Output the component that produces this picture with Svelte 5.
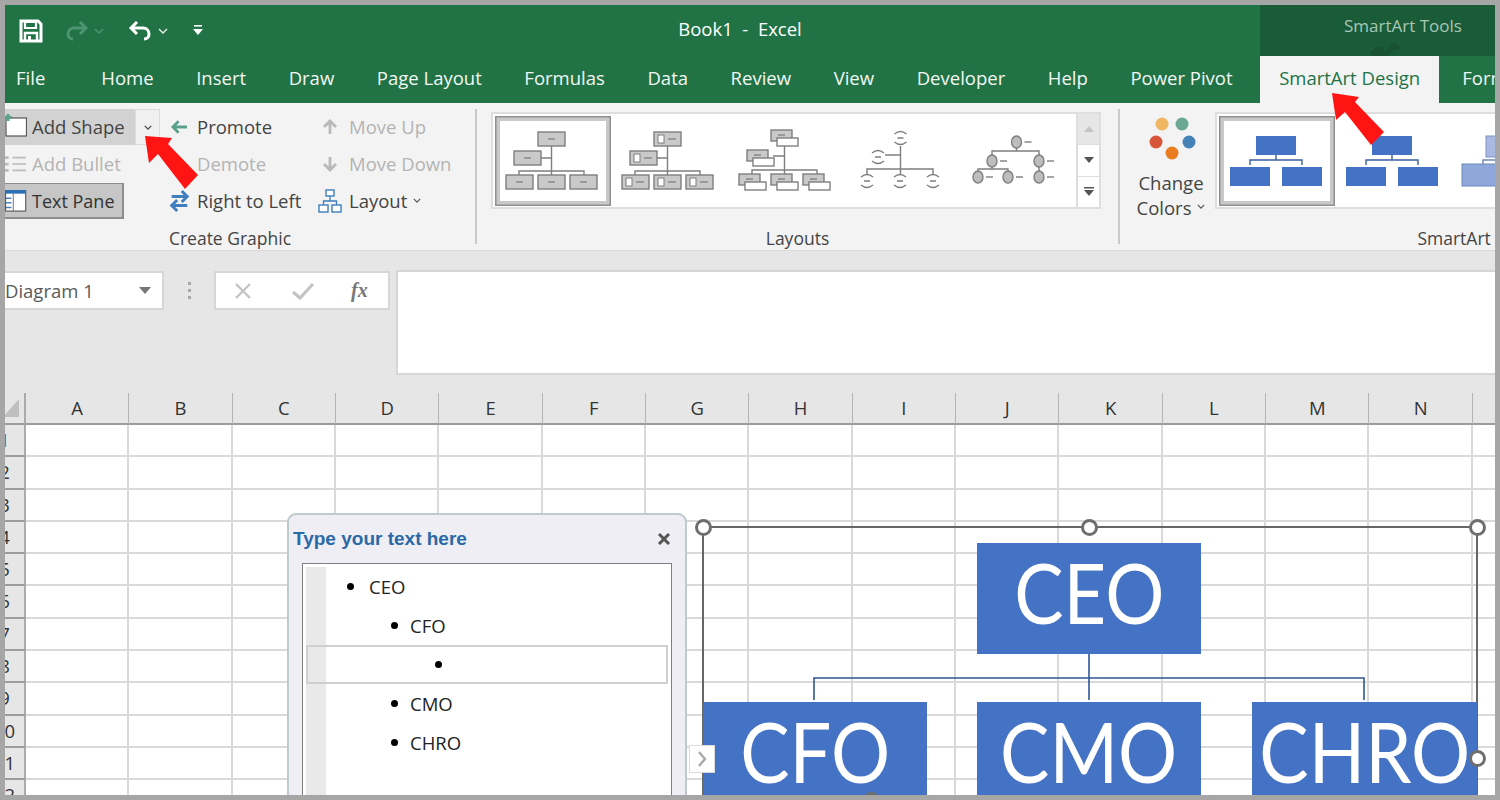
<script>
  const tabs = ['File','Home','Insert','Draw','Page Layout','Formulas','Data','Review','View','Developer','Help','Power Pivot'];
  const cols = 'ABCDEFGHIJKLMNO'.split('');
  const rows = Array.from({length:12},(_,i)=>i+1);
  const box3 = [[11,59],[43,59],[75,59]];
  const ring = [[56.5,22],[34,41],[23,65],[56,65],[89,65]];
  const dots = [[56.5,26],[32,45],[79,45],[18,61],[48,61],[79,61]];
  const layered = [[43,14],[19,34],[11,58],[43,58],[75,58]];
</script>

<div class="frame">
  <header class="titlebar">
    <div class="qat">
      <svg class="save" viewBox="0 0 24 24" width="24" height="24"><path d="M2 2h17l3 3v17H2z" fill="none" stroke="#fff" stroke-width="3"/><path d="M6 3h11v6H6z" fill="none" stroke="#fff" stroke-width="2.2"/><path d="M6 22v-8h12v8" fill="none" stroke="#fff" stroke-width="2.4"/><rect x="9" y="17" width="3" height="5" fill="#fff"/></svg>
      <svg class="redo" viewBox="0 0 24 20" width="24" height="20"><path d="M20 7H9c-4 0-6 3-6 6s2 5 5 5M15 1l6 6-6 6" fill="none" stroke="#4d9470" stroke-width="3"/></svg>
      <svg class="chev c1" viewBox="0 0 10 6" width="10" height="6"><path d="M1 1l4 4 4-4" fill="none" stroke="#4d9470" stroke-width="1.4"/></svg>
      <svg class="undo" viewBox="0 0 24 20" width="24" height="20"><path d="M4 7h11c4 0 6 3 6 6s-2 5-5 5M9 1L3 7l6 6" fill="none" stroke="#fff" stroke-width="3"/></svg>
      <svg class="chev c2" viewBox="0 0 10 6" width="10" height="6"><path d="M1 1l4 4 4-4" fill="none" stroke="#e5efe9" stroke-width="1.4"/></svg>
      <svg class="cust" viewBox="0 0 10 11" width="10" height="11"><rect x="1" y="0" width="8" height="1.6" fill="#fff"/><path d="M0 4h10L5 10z" fill="#fff"/></svg>
    </div>
    <div class="doc">Book1&nbsp; - &nbsp;Excel</div>
    <div class="tools">
      <span>SmartArt Tools</span>
      <svg class="leaf" viewBox="0 0 40 20" width="40" height="20"><path d="M4 18C10 8 16 8 20 16 24 6 30 4 36 14 30 12 26 14 22 20H8z" fill="#185233"/></svg>
    </div>
  </header>

  <nav class="tabs">
    {#each tabs as t}<span class="tab">{t}</span>{/each}
    <span class="tab active">SmartArt Design</span>
    <span class="tab">Format</span>
  </nav>

  <section class="ribbon">
    <div class="group g1">
      <div class="cmds">
        <div class="cmd split">
          <span class="ic"><svg viewBox="0 0 22 24" width="22" height="24"><rect x="1" y="4" width="20.5" height="18" fill="#fff" stroke="#555" stroke-width="1.2"/><path d="M3 0v7M0 3.5h7" stroke="#5b9f8d" stroke-width="3"/></svg></span>Add Shape
        </div>
        <div class="caret"><svg viewBox="0 0 10 6" width="8" height="5"><path d="M1 1l4 4 4-4" fill="none" stroke="#444" stroke-width="1.6"/></svg></div>
        <div class="cmd wide"><span class="ic"><svg viewBox="0 0 24 18" width="22" height="18"><path d="M8 2h15M8 9h15M8 16h15" stroke="#bbb" stroke-width="1.8"/><path d="M0 2h4M0 9h4M0 16h4" stroke="#bbb" stroke-width="3"/></svg></span><span class="dis">Add Bullet</span></div>
        <div class="cmd pressed"><span class="ic"><svg viewBox="0 0 24 24" width="22" height="24"><rect x="0.6" y="1" width="22" height="22" fill="#fff" stroke="#555" stroke-width="1.2"/><rect x="0" y="0" width="23" height="4" fill="#2e6fb5"/><path d="M1 9h6M1 14h6M1 19h6" stroke="#4a7fb8" stroke-width="1.6"/><path d="M9 4v19" stroke="#666"/></svg></span>Text Pane</div>
      </div>
      <div class="col2">
        <div class="cmd c2i"><span class="ic"><svg viewBox="0 0 18 14" width="17" height="14"><path d="M17 7H3M8 1L2 7l6 6" fill="none" stroke="#5b9f8d" stroke-width="3"/></svg></span>Promote</div>
        <div class="cmd c2i"><span class="ic"></span><span class="dis">Demote</span></div>
        <div class="cmd c2i"><span class="ic"><svg viewBox="0 0 24 24" width="23" height="24"><path d="M3 8h17M14 2l6 6-6 6" fill="none" stroke="#3f7fbd" stroke-width="3.2" transform="translate(1 -1)"/><path d="M21 17H4M10 11l-6 6 6 6" fill="none" stroke="#3f7fbd" stroke-width="3.2"/></svg></span>Right to Left</div>
      </div>
      <div class="col3">
        <div class="cmd c3i"><span class="ic"><svg viewBox="0 0 14 16" width="14" height="16"><path d="M7 15V3M1 8l6-6 6 6" fill="none" stroke="#b9b9b9" stroke-width="2.8"/></svg></span><span class="dis">Move Up</span></div>
        <div class="cmd c3i"><span class="ic"><svg viewBox="0 0 14 16" width="14" height="16"><path d="M7 1v12M1 8l6 6 6-6" fill="none" stroke="#b9b9b9" stroke-width="2.8"/></svg></span><span class="dis">Move Down</span></div>
        <div class="cmd c3i"><span class="ic"><svg viewBox="0 0 24 24" width="24" height="24"><g fill="#fff" stroke="#3f7fbd" stroke-width="1.4"><rect x="8" y="1" width="8" height="6"/><rect x="1" y="16" width="9" height="7"/><rect x="14" y="16" width="9" height="7"/></g><path d="M12 7v5M5.5 16v-4h13v4" fill="none" stroke="#3f7fbd" stroke-width="1.3"/></svg></span>Layout<svg class="mini" viewBox="0 0 10 6" width="8" height="5"><path d="M1 1l4 4 4-4" fill="none" stroke="#555" stroke-width="1.5"/></svg></div>
      </div>
      <div class="glabel">Create Graphic</div>
    </div>

    <div class="group g2">
      <div class="gallery">
        <div class="thumb sel">
          <svg viewBox="0 0 116 90" width="116" height="90">
            <g fill="none" stroke="#7f7f7f" stroke-width="1.4"><path d="M56.5 30v29M45 42h11M24 59v-4h65v4"/></g>
            {#each [[43,16],[19,35],...box3] as [x,y]}<rect x={x} y={y} width="27" height="14" fill="#c9c9c9" stroke="#7f7f7f" stroke-width="1.4"/><path d="M{x+10} {y+7}h7" stroke="#7f7f7f" stroke-width="1.3"/>{/each}
          </svg>
        </div>
        <div class="thumb">
          <svg viewBox="0 0 116 90" width="116" height="90">
            <g fill="none" stroke="#7f7f7f" stroke-width="1.4"><path d="M56.5 30v29M45 42h11M24 59v-4h65v4"/></g>
            {#each [[43,16],[19,35],...box3] as [x,y]}<rect x={x} y={y} width="27" height="14" fill="#c9c9c9" stroke="#7f7f7f" stroke-width="1.4"/><rect x={x+4} y={y+3} width="6" height="8" fill="#fff" stroke="#7f7f7f"/><path d="M{x+14} {y+7}h8" stroke="#7f7f7f" stroke-width="1.3"/>{/each}
          </svg>
        </div>
        <div class="thumb">
          <svg viewBox="0 0 116 90" width="116" height="90">
            <g fill="none" stroke="#7f7f7f" stroke-width="1.4"><path d="M56.5 30v28M45 40h11M24 58v-4h65v4"/></g>
            {#each layered as [x,y]}<rect x={x} y={y} width="21" height="11" fill="#c9c9c9" stroke="#7f7f7f" stroke-width="1.4"/><path d="M{x+7} {y+5}h7" stroke="#7f7f7f" stroke-width="1.3"/><rect x={x+6} y={y+8} width="21" height="8" fill="#fff" stroke="#7f7f7f" stroke-width="1.4"/>{/each}
          </svg>
        </div>
        <div class="thumb">
          <svg viewBox="0 0 116 90" width="116" height="90">
            <g fill="none" stroke="#7f7f7f" stroke-width="1.4"><path d="M56.5 30v28M41 39h15M23 58v-5h66v5"/></g>
            {#each ring as [x,y]}<path d="M{x-6} {y-4}q6-5 12 0M{x-6} {y+4}q6 5 12 0M{x-3} {y}h6" fill="none" stroke="#7f7f7f" stroke-width="1.4"/>{/each}
          </svg>
        </div>
        <div class="thumb">
          <svg viewBox="0 0 116 90" width="116" height="90">
            <g fill="none" stroke="#7f7f7f" stroke-width="1.4"><path d="M56.5 30v5M32 41v-6h47v6M32 49v4M18 57v-4h30v4M79 49v8"/></g>
            {#each dots as [x,y]}<ellipse cx={x} cy={y} rx="5" ry="6" fill="#bdbdbd" stroke="#7f7f7f" stroke-width="1.4"/><path d="M{x+8} {y}h7" stroke="#7f7f7f" stroke-width="1.4"/>{/each}
          </svg>
        </div>
        <div class="scroll">
          <div class="sb up"><svg viewBox="0 0 10 6" width="10" height="6"><path d="M0 6l5-6 5 6z" fill="#c4c4c4"/></svg></div>
          <div class="sb"><svg viewBox="0 0 10 6" width="10" height="6"><path d="M0 0l5 6 5-6z" fill="#555"/></svg></div>
          <div class="sb"><svg viewBox="0 0 10 9" width="10" height="9"><path d="M0 0h10v1.4H0zM0 3l5 6 5-6z" fill="#555"/></svg></div>
        </div>
      </div>
      <div class="glabel">Layouts</div>
    </div>

    <div class="group g3">
      <div class="g3row">
        <div class="colors">
          <svg viewBox="0 0 50 46" width="50" height="46">
            <circle cx="13" cy="7" r="6.5" fill="#efb663"/><circle cx="33" cy="7" r="6.5" fill="#6aa893"/><circle cx="7" cy="25" r="6.5" fill="#d9553a"/><circle cx="40" cy="25" r="6.5" fill="#4682b8"/><circle cx="23" cy="36" r="6.5" fill="#e97b20"/>
          </svg>
          <span class="ctext">Change</span>
          <span class="ctext">Colors<svg class="mini" viewBox="0 0 10 6" width="8" height="5"><path d="M1 1l4 4 4-4" fill="none" stroke="#555" stroke-width="1.5"/></svg></span>
        </div>
        <div class="gallery g-c">
          <div class="thumb sel">
            <svg viewBox="0 0 116 90" width="116" height="90"><path d="M31 49v-5h52v5M57 39v5" fill="none" stroke="#3a5f9e" stroke-width="1.4"/><rect x="37" y="20" width="40" height="19" fill="#4472c4"/><rect x="11" y="51" width="40" height="19" fill="#4472c4"/><rect x="63" y="51" width="40" height="19" fill="#4472c4"/></svg>
          </div>
          <div class="thumb">
            <svg viewBox="0 0 116 90" width="116" height="90"><path d="M31 49v-5h52v5M57 39v5" fill="none" stroke="#3a5f9e" stroke-width="1.4"/><rect x="37" y="20" width="40" height="19" fill="#4472c4"/><rect x="11" y="51" width="40" height="19" fill="#4472c4"/><rect x="63" y="51" width="40" height="19" fill="#4472c4"/></svg>
          </div>
          <div class="thumb">
            <svg viewBox="0 0 116 90" width="116" height="90"><path d="M31 49v-5h52v5M57 39v5" fill="none" stroke="#6f87b8" stroke-width="1.4"/><rect x="34" y="20" width="40" height="21" fill="#a9b9e2" stroke="#7d93c4"/><rect x="10" y="48" width="40" height="22" fill="#8fa8dc" stroke="#6f87b8"/><rect x="62" y="48" width="40" height="22" fill="#8fa8dc" stroke="#6f87b8"/></svg>
          </div>
        </div>
      </div>
      <div class="glabel">SmartArt Styles</div>
    </div>
  </section>

  <section class="formula">
    <div class="namebox"><span>Diagram 1</span><svg viewBox="0 0 12 7" width="12" height="7"><path d="M0 0h12L6 7z" fill="#777"/></svg></div>
    <div class="grip"><i></i><i></i><i></i></div>
    <div class="fxbox">
      <svg viewBox="0 0 18 18" width="18" height="18"><path d="M2 2l14 14M16 2L2 16" stroke="#c4c4c4" stroke-width="2.4"/></svg>
      <svg viewBox="0 0 24 18" width="24" height="18"><path d="M2 10l7 6L22 2" fill="none" stroke="#c4c4c4" stroke-width="3.2"/></svg>
      <span class="fx">fx</span>
    </div>
    <div class="finput"></div>
  </section>

  <section class="sheet">
    <div class="corner"><svg viewBox="0 0 16 18" width="16" height="18"><path d="M16 0v18H0z" fill="#bfbfbf"/></svg></div>
    {#each cols as c}<div class="colh">{c}</div>{/each}
    {#each rows as r}
      <div class="rowh" class:cur={r===1}>{r}</div>
      {#each cols as c}<div class="cell"></div>{/each}
    {/each}
  </section>

  <aside class="pane">
    <div class="phead"><span>Type your text here</span><svg viewBox="0 0 14 14" width="14" height="14"><path d="M2 2l10 10M12 2L2 12" stroke="#555" stroke-width="3"/></svg></div>
    <div class="plist">
      <div class="pbody">
        <div class="li l1"><i></i>CEO</div>
        <div class="li l2"><i></i>CFO</div>
        <div class="li l3 current"><b></b><i></i></div>
        <div class="li l2"><i></i>CMO</div>
        <div class="li l2"><i></i>CHRO</div>
      </div>
    </div>
  </aside>

  <div class="diagram">
    <svg class="links" viewBox="0 0 774 180" width="774" height="180"><path d="M386 127v46M111 173v-22h550v22" fill="none" stroke="#2f5597" stroke-width="1.6"/></svg>
    <div class="node ceo"><span>CEO</span></div>
    <div class="node cfo"><span>CFO</span></div>
    <div class="node cmo"><span>CMO</span></div>
    <div class="node chro"><span>CHRO</span></div>
    <i class="h h1"></i><i class="h h2"></i><i class="h h3"></i><i class="h h4"></i><i class="h h5"></i>
  </div>
  <div class="toggle"><svg viewBox="0 0 10 18" width="10" height="18"><path d="M2 2l6 7-6 7" fill="none" stroke="#aaa" stroke-width="2.4"/></svg></div>

  <svg class="arrow a1" viewBox="0 0 60 60" width="60" height="60"><path d="M1 2L28 4 24 10 54 41 41 55 14 20 5 29z" fill="#ff1414"/></svg>
  <svg class="arrow a2" viewBox="0 0 60 60" width="60" height="60"><path d="M1 1L28 5 24 10 53 40 40 53 14 20 5 28z" fill="#ff1414"/></svg>
</div>

<style>
  :global(body){margin:0;}
  .frame{position:relative;width:1500px;height:800px;box-sizing:border-box;border:5px solid #a6a6a6;overflow:hidden;background:#fff;font-family:"Open Sans","Noto Sans",sans-serif;font-size:18.5px;color:#444;}
  svg{display:block;}
  i{display:block;}

  .titlebar{display:flex;height:51px;background:#217346;color:#fff;}
  .qat{width:215px;flex:none;display:flex;align-items:center;padding:0 0 0 14px;box-sizing:border-box;}
  .redo{margin-left:22px;}
  .c1{margin-left:5px;}
  .undo{margin-left:24px;}
  .c2{margin-left:6px;}
  .cust{margin-left:25px;}
  .doc{flex:1;text-align:center;line-height:47px;}
  .tools{position:relative;width:235px;flex:none;background:#1a5c38;color:#a8c7b6;line-height:42px;font-size:17px;}
  .tools span{position:absolute;left:84px;white-space:nowrap;}
  .leaf{position:absolute;left:106px;top:31px;}

  .tabs{display:flex;height:47px;background:#217346;color:#f2f7f4;white-space:nowrap;padding-left:11px;}
  .tab{line-height:44px;margin-right:42.6px;}
  .tab:first-child{margin-right:56px;}
  .tab.active{background:#f3f3f3;color:#217346;padding:0 19px;margin:0 23px 0 -15px;}

  .ribbon{display:flex;height:148px;box-sizing:border-box;padding-top:6px;padding-bottom:6px;background:#f3f3f3;border-bottom:1px solid #d9d9d9;}
  .group{position:relative;flex:none;box-sizing:border-box;border-right:2px solid #c9c9c9;}
  .glabel{position:absolute;left:0;right:0;bottom:-6px;text-align:center;line-height:24px;font-size:17.5px;white-space:nowrap;}
  .g1{margin-left:-20px;width:492px;display:flex;}
  .cmds{width:175px;flex:none;display:grid;grid-template-columns:150px 25px;grid-auto-rows:37px;}
  .cmd{display:flex;align-items:center;white-space:nowrap;padding-bottom:2px;box-sizing:border-box;}
  .ic{display:flex;align-items:center;justify-content:center;flex:none;}
  .dis{color:#b4b4b4;}
  .cmds .ic{width:22px;margin-right:5px;}
  .cmds .cmd{padding-left:20px;}
  .split{background:#d2d2d2;height:36px;}
  .caret{display:flex;align-items:center;justify-content:center;height:34px;background:#f0f0f0;border:1px solid #dcdcdc;}
  .wide{grid-column:1 / span 2;}
  .cmds .pressed{grid-column:1 / span 2;width:139px;height:36px;padding-left:19px;padding-bottom:0;background:#c6c6c6;border:1px solid #8c8c8c;border-width:1px 2px 2px 1px;color:#333;font-size:18px;}
  .col2{width:152px;flex:none;display:grid;grid-auto-rows:37px;align-content:start;}
  .col3{flex:1;display:grid;grid-auto-rows:37px;align-content:start;}
  .c2i{padding-left:8px;}
  .c2i .ic{width:22px;margin-right:7px;}
  .c3i{padding-left:6px;}
  .c3i .ic{width:24px;margin-right:7px;}
  .mini{margin-left:6px;}

  .g2{width:643px;padding:3px 0 0 14px;}
  .gallery{display:flex;height:97px;width:610px;box-sizing:border-box;background:#fff;border:2px solid #dedede;padding:2px 0 0 2px;}
  .thumb{flex:none;width:116.3px;height:90px;box-sizing:border-box;}
  .thumb.sel{background:#fff;box-shadow:inset 0 0 0 1.5px #8f8f8f,inset 0 0 0 5px #c8c8c8;}
  .scroll{margin:-2px 0 0 auto;width:22px;display:flex;flex-direction:column;border-left:2px solid #dedede;}
  .sb{flex:1;display:flex;align-items:center;justify-content:center;border-bottom:1px solid #dedede;}
  .sb:last-child{border:0;}
  .up{background:#e6e6e6;}

  .g3{width:720px;border:0;padding:3px 0 0 5px;}
  .g3row{display:flex;}
  .colors{width:92px;flex:none;display:flex;flex-direction:column;align-items:center;}
  .colors svg:first-child{margin:5px 0 7px 6px;}
  .ctext{display:flex;align-items:center;line-height:25px;}
  .g-c{width:600px;margin-left:-2px;}

  .formula{display:flex;align-items:flex-start;height:142px;box-sizing:border-box;padding-top:19px;background:#e6e6e6;}
  .namebox{width:159px;height:39px;margin-top:1px;box-sizing:border-box;display:flex;align-items:center;justify-content:space-between;padding-right:11px;background:#fff;border:2px solid #d6d6d6;border-left:0;color:#595959;}
  .grip{width:50px;height:39px;margin-top:1px;display:flex;flex-direction:column;align-items:center;justify-content:center;gap:4px;}
  .grip i{width:3px;height:3px;background:#a8a8a8;}
  .fxbox{width:176px;height:39px;margin-top:1px;box-sizing:border-box;display:flex;align-items:center;gap:39px;padding-left:18px;background:#fff;border:2px solid #d6d6d6;}
  .fx{font:italic bold 20px "Liberation Serif",serif;color:#777;margin-left:-3px;}
  .finput{flex:1;margin-left:6px;height:105px;box-sizing:border-box;background:#fff;border:2px solid #d6d6d6;border-right:0;}

  .sheet{margin-left:-22px;display:grid;grid-template-columns:43px repeat(15,103.35px);grid-template-rows:32px;grid-auto-rows:32.3px;}
  .corner{background:#e6e6e6;display:flex;justify-content:flex-end;align-items:flex-end;padding:0 5px 6px 0;box-sizing:border-box;border-right:2px solid #ababab;border-bottom:2px solid #9c9c9c;}
  .colh{background:#e6e6e6;text-align:center;line-height:30px;color:#333;border-right:1px solid #b4b4b4;border-bottom:2px solid #9c9c9c;box-sizing:border-box;}
  .rowh{background:#e6e6e6;text-align:center;padding-left:2px;line-height:30px;color:#333;border-right:2px solid #ababab;border-bottom:2px solid #9c9c9c;box-sizing:border-box;white-space:nowrap;}
  .rowh.cur{color:#2e75b6;}
  .cell{border-right:2px solid #d9d9d9;border-bottom:2px solid #d9d9d9;box-sizing:border-box;}

  .pane{position:absolute;left:282px;top:508px;width:400px;height:300px;box-sizing:border-box;background:#eeeef4;border:2px solid #bccbcd;border-radius:9px 9px 0 0;padding:0 13px;}
  .phead{display:flex;align-items:center;justify-content:space-between;height:48px;margin-left:-9px;padding-right:1px;font:bold 19px "Liberation Sans",sans-serif;color:#2b69a6;}
  .plist{height:300px;box-sizing:border-box;border:1px solid #808080;background:#fff;padding:3px 3px 0;}
  .pbody{border-left:20px solid #e9e9e9;height:100%;color:#222;}
  .li{display:flex;align-items:center;height:39px;box-sizing:border-box;}
  .li i{width:7px;height:7px;border-radius:50%;background:#000;flex:none;}
  .l1{padding-left:21px;}
  .l1 i{margin-right:15px;}
  .l2{padding-left:65px;}
  .l2 i{margin-right:12px;}
  .l3{padding-left:109px;}
  .current{position:relative;background:#fff;}
  .current b{position:absolute;left:-20px;top:0;right:0;bottom:0;border:2px solid #cfcfcf;background:linear-gradient(90deg,#e9e9e9 18px,transparent 18px);}
  .current i{position:relative;}

  .diagram{position:absolute;left:697px;top:521px;width:776px;height:280px;box-sizing:border-box;border:solid #666;border-width:2px 2px 0 2px;}
  .links{position:absolute;left:-1px;top:-1px;}
  .node{position:absolute;width:224px;height:111px;box-sizing:border-box;padding-bottom:13px;background:#4472c4;color:#fff;display:flex;align-items:center;justify-content:center;font:84px/1 Lato,sans-serif;}
  .node span{display:block;transform:scaleX(.88);white-space:nowrap;}
  .ceo{left:273px;top:15px;}
  .cfo{left:-1px;top:174px;}
  .cmo{left:273px;top:174px;}
  .chro{left:548px;top:174px;width:225px;}
  .h{position:absolute;width:11px;height:11px;border:3px solid #6e6e6e;border-radius:50%;background:#fff;}
  .h1{left:-9.5px;top:-9.5px;}
  .h2{left:376.5px;top:-9.5px;}
  .h3{left:764.5px;top:-9.5px;}
  .h4{left:764.5px;top:221.5px;}
  .h5{left:158.5px;top:263.5px;}
  .toggle{position:absolute;left:684px;top:740px;width:26px;height:28px;background:#fff;border:1px solid #dcdcdc;box-sizing:border-box;display:flex;align-items:center;justify-content:center;}

  .arrow{position:absolute;}
  .a1{left:139px;top:129px;}
  .a2{left:1326px;top:87px;}
</style>
